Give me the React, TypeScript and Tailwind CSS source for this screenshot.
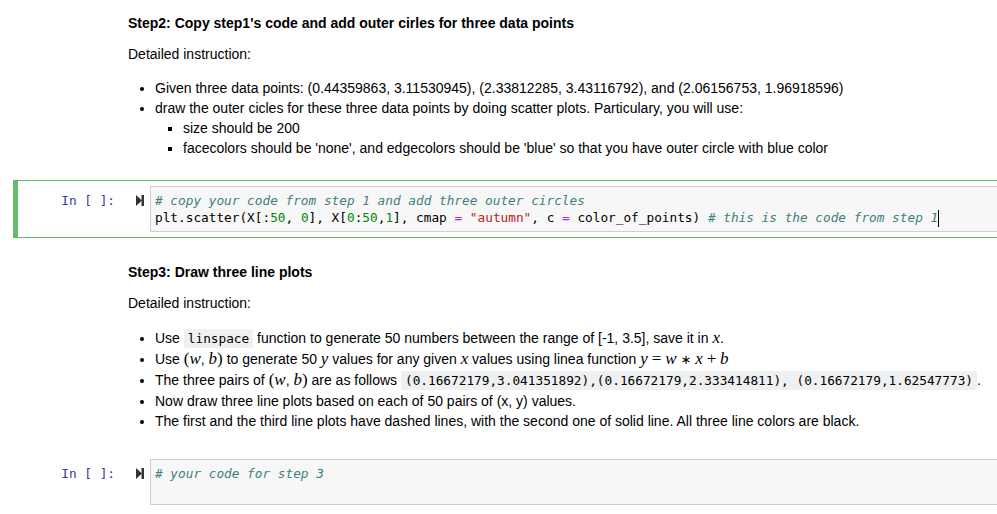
import React from 'react';

const mono = "font-['DejaVu_Sans_Mono','Liberation_Mono',monospace]";

function RunIcon() {
    return (
        <svg width="8" height="11" viewBox="0 0 8 11" className="block">
            <polygon points="0,0 6,5.5 0,11" fill="#333" />
            <rect x="5.5" y="0" width="2.5" height="11" fill="#333" />
        </svg>
    );
}

function Code({ children }: { children: React.ReactNode }) {
    return (
        <code className={`${mono} rounded-[2px] bg-[#eff0f1] px-[4px] py-[2px] text-[12.75px] text-[#000]`}>{children}</code>
    );
}

function M({ children }: { children: React.ReactNode }) {
    return <span className="font-['Liberation_Serif',serif] text-[17px] italic">{children}</span>;
}

function MathUp({ children }: { children: React.ReactNode }) {
    return <span className="font-['Liberation_Serif',serif] text-[17px]">{children}</span>;
}

function CodeCell({ selected, children }: { selected?: boolean; children: React.ReactNode }) {
    return (
        <div
            className={`ml-[13px] flex w-[1010px] py-[5px] ${
                selected ? 'border border-l-[5px] border-[#66bb6a]' : 'border border-l-[5px] border-transparent'
            }`}
        >
            <div className="flex w-[132px] shrink-0 items-start pt-[6px]">
                <div className={`${mono} w-[97px] text-right text-[12.75px] leading-[17px] text-[#303f9f]`}>In [ ]:</div>
                <div className="ml-[21px] pt-[3px]">
                    <RunIcon />
                </div>
            </div>
            <div
                className={`${mono} h-[46px] flex-1 border border-[#cfcfcf] bg-[#f7f7f7] pt-[5px] pl-[4px] text-[12.75px] leading-[17px] whitespace-pre text-black`}
            >
                {children}
            </div>
        </div>
    );
}

const cm = 'italic text-[#408080]';
const num = 'text-[#008800]';
const op = 'text-[#aa22ff]';
const str = 'text-[#ba2121]';

export default function App() {
    return (
        <div className="h-[514px] w-[997px] overflow-hidden bg-white font-['Liberation_Sans',Arial,sans-serif] text-[14px] leading-[20px] text-black">
            {/* Step 2 markdown */}
            <div className="pt-[13px] pl-[128px]">
                <h4 className="font-bold">Step2: Copy step1's code and add outer cirles for three data points</h4>
                <p className="mt-[11px]">Detailed instruction:</p>
                <ul className="mt-[14px] list-disc pl-[27px]">
                    <li>
                        Given three data points: (0.44359863, 3.11530945), (2.33812285, 3.43116792), and (2.06156753,
                        1.96918596)
                    </li>
                    <li>
                        draw the outer cicles for these three data points by doing scatter plots. Particulary, you will use:
                        <ul className="list-[square] pl-[28px]">
                            <li>size should be 200</li>
                            <li>facecolors should be 'none', and edgecolors should be 'blue' so that you have outer circle with blue color</li>
                        </ul>
                    </li>
                </ul>
            </div>

            <div className="mt-[22px]">
                <CodeCell selected>
                    <div>
                        <span className={cm}># copy your code from step 1 and add three outer circles</span>
                    </div>
                    <div>
                        plt.scatter(X[:<span className={num}>50</span>, <span className={num}>0</span>], X[
                        <span className={num}>0</span>:<span className={num}>50</span>,<span className={num}>1</span>], cmap{' '}
                        <span className={op}>=</span> <span className={str}>"autumn"</span>, c <span className={op}>=</span>{' '}
                        color_of_points) <span className={cm}># this is the code from step </span>
                        <span className={`${cm} relative`}>
                            1
                            <span className="absolute top-0 right-[-1px] h-[17px] w-px bg-black" />
                        </span>
                    </div>
                </CodeCell>
            </div>

            {/* Step 3 markdown */}
            <div className="pt-[24px] pl-[128px]">
                <h4 className="font-bold">Step3: Draw three line plots</h4>
                <p className="mt-[11px]">Detailed instruction:</p>
                <ul className="mt-[15px] list-disc pl-[27px]">
                    <li>
                        Use <Code>linspace</Code> function to generate 50 numbers between the range of [-1, 3.5], save it in{' '}
                        <M>x</M>.
                    </li>
                    <li>
                        Use <MathUp>(</MathUp>
                        <M>w</M>, <M>b</M>
                        <MathUp>)</MathUp> to generate 50 <M>y</M> values for any given <M>x</M> values using linea function{' '}
                        <M>y</M> <MathUp>=</MathUp> <M>w</M> <span className="font-['DejaVu_Sans',sans-serif] text-[13px]">∗</span>{' '}
                        <M>x</M> <MathUp>+</MathUp> <M>b</M>
                    </li>
                    <li>
                        The three pairs of <MathUp>(</MathUp>
                        <M>w</M>, <M>b</M>
                        <MathUp>)</MathUp> are as follows{' '}
                        <Code>(0.16672179,3.041351892),(0.16672179,2.333414811), (0.16672179,1.62547773)</Code>.
                    </li>
                    <li>Now draw three line plots based on each of 50 pairs of (x, y) values.</li>
                    <li>
                        The first and the third line plots have dashed lines, with the second one of solid line. All three line
                        colors are black.
                    </li>
                </ul>
            </div>

            <div className="mt-[22px]">
                <CodeCell>
                    <span className={cm}># your code for step 3</span>
                </CodeCell>
            </div>
        </div>
    );
}
